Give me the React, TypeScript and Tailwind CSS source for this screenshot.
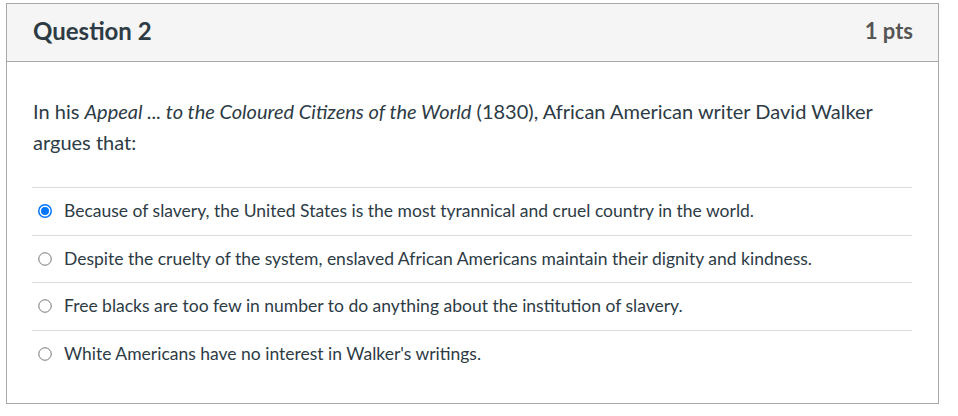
const options = [
  "Because of slavery, the United States is the most tyrannical and cruel country in the world.",
  "Despite the cruelty of the system, enslaved African Americans maintain their dignity and kindness.",
  "Free blacks are too few in number to do anything about the institution of slavery.",
  "White Americans have no interest in Walker's writings.",
];

const Radio = ({ checked }: { checked: boolean }) =>
  checked ? (
    <svg width="14" height="14" viewBox="0 0 14 14" className="shrink-0">
      <circle cx="7" cy="7" r="6.25" fill="white" stroke="#0075ff" strokeWidth="1.5" />
      <circle cx="7" cy="7" r="4" fill="#0075ff" />
    </svg>
  ) : (
    <svg width="14" height="14" viewBox="0 0 14 14" className="shrink-0">
      <circle cx="7" cy="7" r="6.25" fill="white" stroke="#767676" strokeWidth="1" />
    </svg>
  );

export default function App() {
  return (
    <div className="bg-white h-[416px] pt-[3px] pl-[6px] font-['Lato','Noto_Sans',sans-serif] text-[#2d3b45]">
      <div className="w-[933px] h-[401px] border border-[#a8a8a8] bg-white">
        <div className="flex items-center justify-between h-[58px] pb-[4px] bg-[#f5f5f5] border-b border-[#a8a8a8] pl-[26px] pr-[25px]">
          <h2 className="text-[24px] font-bold leading-none">Question 2</h2>
          <span className="text-[22px] font-bold text-[#555] leading-none">1 pts</span>
        </div>
        <div className="pl-[26px] pr-[26px] pt-[34px]">
          <p className="text-[20px] leading-[31px] pr-[20px]">
            In his <i>Appeal ... to the Coloured Citizens of the World</i> (1830), African American writer David Walker argues that:
          </p>
          <div className="mt-[29px] ml-[-1px] w-[880px]">
            {options.map((text, i) => (
              <label
                key={i}
                className="flex items-center gap-[12px] h-[47.5px] border-t border-[#dcdcdc] pl-[6px] text-[17.5px] font-normal"
              >
                <Radio checked={i === 0} />
                <span>{text}</span>
              </label>
            ))}
          </div>
        </div>
      </div>
    </div>
  );
}
